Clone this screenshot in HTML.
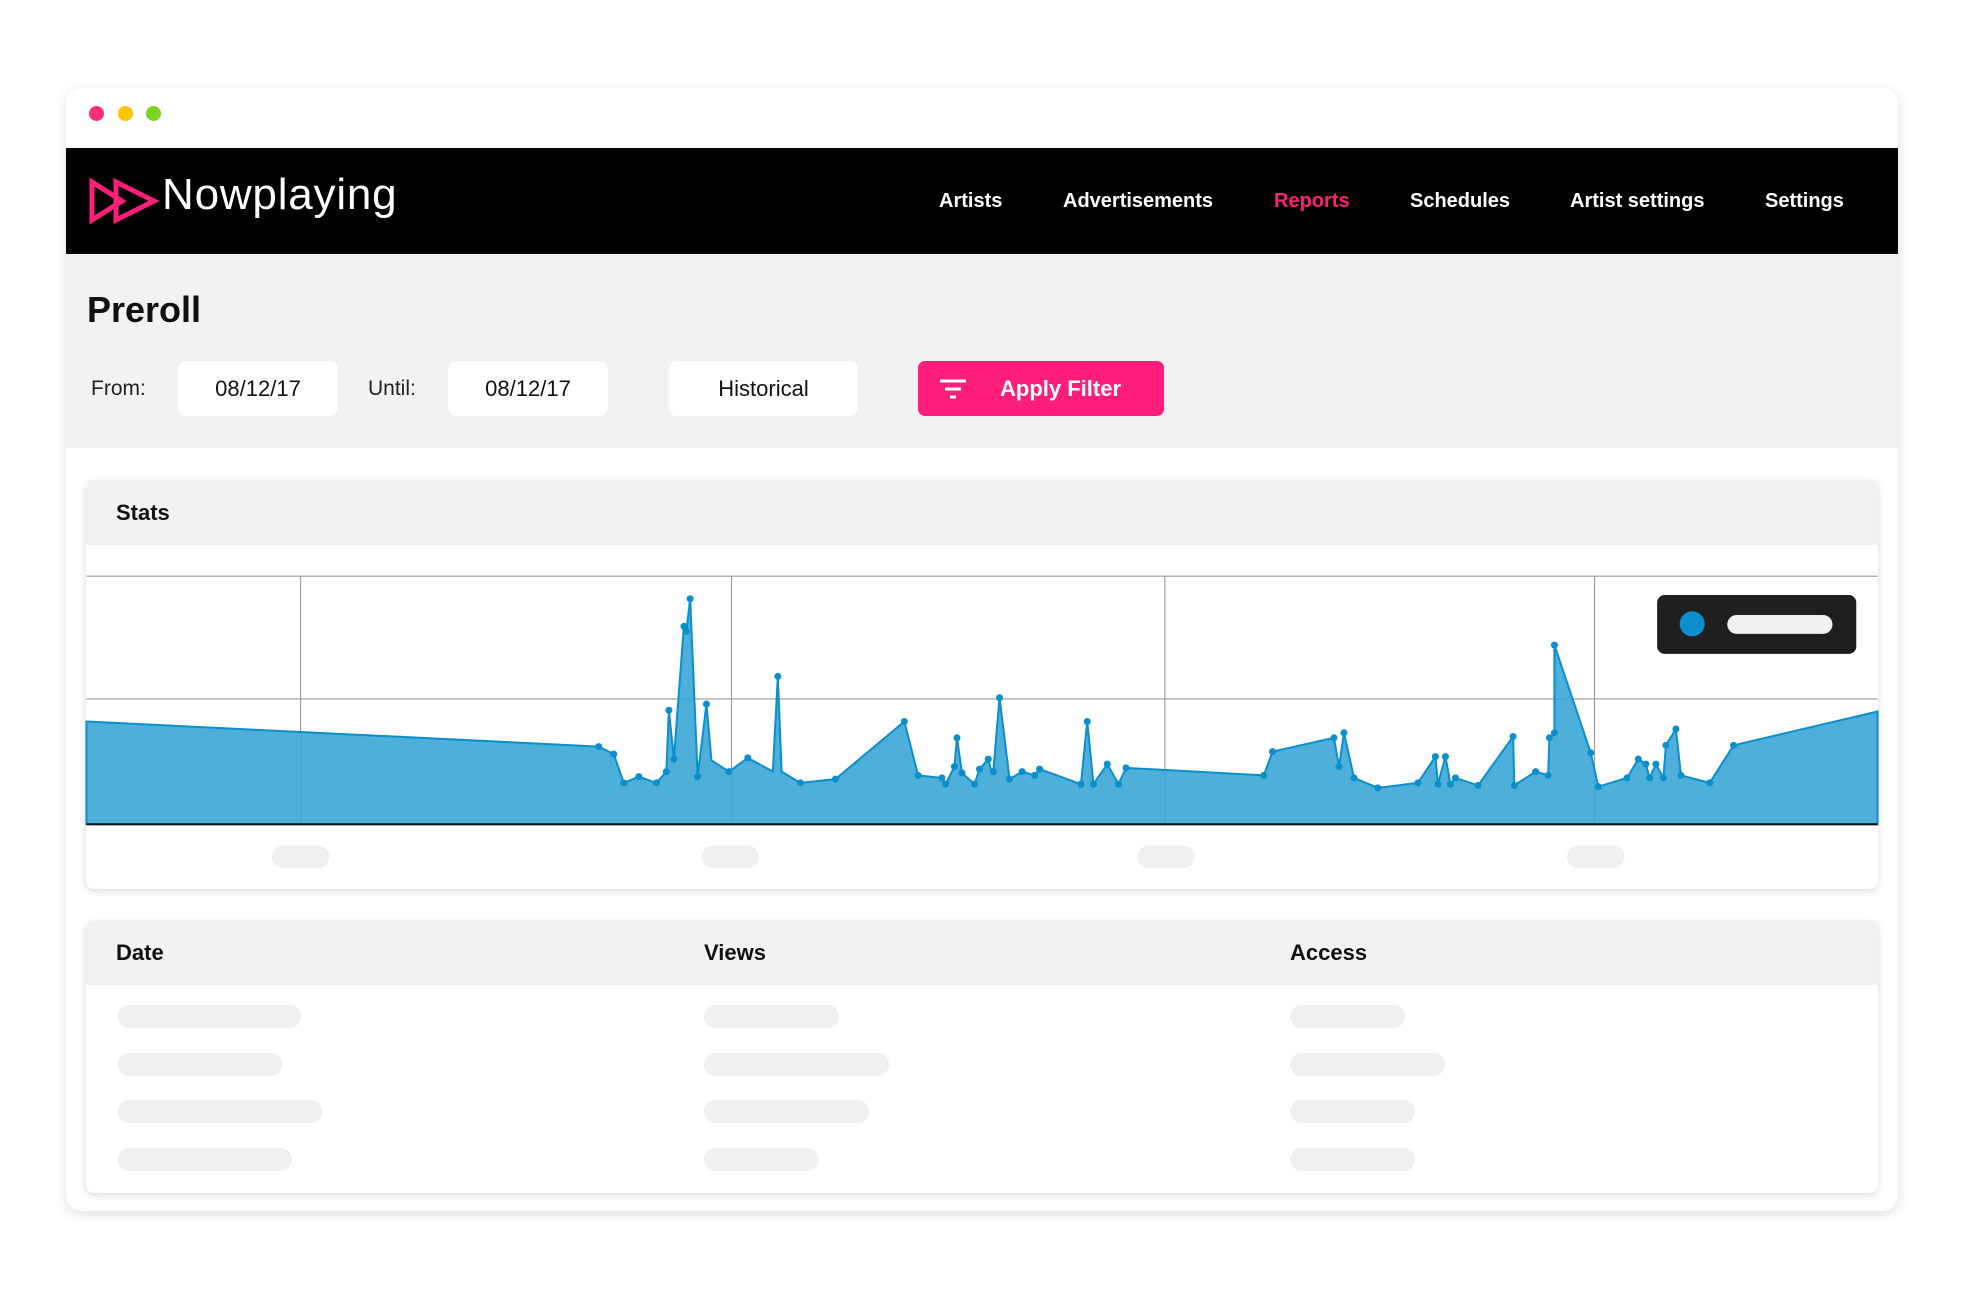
<!DOCTYPE html>
<html><head><meta charset="utf-8"><style>
*{margin:0;padding:0;box-sizing:border-box}
body{width:1964px;height:1298px;background:#fff;position:relative;overflow:hidden;font-family:"Liberation Sans",sans-serif}
.a{position:absolute}
.win{left:66px;top:88px;width:1832px;height:1123px;background:#fff;border-radius:16px;box-shadow:0 3px 14px rgba(0,0,0,.13);overflow:hidden}
.dot{width:15px;height:15px;border-radius:50%;top:106px}
.nav{left:66px;top:148px;width:1832px;height:106px;background:#000}
.ni{top:190px;font-size:20px;font-weight:bold;color:#fff;letter-spacing:0}
.gray{left:66px;top:254px;width:1832px;height:194px;background:#f2f2f2}
.box{background:#fff;border-radius:8px;height:55px;top:361px;font-size:22px;color:#111;text-align:center;line-height:55px}
.lbl{top:361px;line-height:55px;font-size:21px;color:#222}
.card{background:#fff;border-radius:8px;box-shadow:0 2px 8px rgba(0,0,0,.15);overflow:hidden}
.ch{background:#f2f2f2;font-size:22px;font-weight:bold;color:#111}
.p{background:#f0f0f0;height:23px;border-radius:12px}
</style></head><body>
<div class="a win"></div>
<div class="a dot" style="left:89px;background:#ff2e7a"></div>
<div class="a dot" style="left:118px;background:#ffc400"></div>
<div class="a dot" style="left:146px;background:#7ed321"></div>
<div class="a nav"></div>
<svg class="a" style="left:88px;top:178px" width="72" height="46" viewBox="0 0 72 46"><g fill="none" stroke="#ff1f7a" stroke-width="5" stroke-linejoin="miter"><path d="M4 4 L4 42 L34 23 Z"/><path d="M28 4 L28 42 L66 23 Z"/></g></svg>
<div class="a" style="left:162px;top:170px;font-size:44px;color:#fff;letter-spacing:.8px">Nowplaying</div>
<div class="a ni" style="left:939px">Artists</div>
<div class="a ni" style="left:1063px">Advertisements</div>
<div class="a ni" style="left:1274px;color:#ff1f7a">Reports</div>
<div class="a ni" style="left:1410px">Schedules</div>
<div class="a ni" style="left:1570px">Artist settings</div>
<div class="a ni" style="left:1765px">Settings</div>
<div class="a gray"></div>
<div class="a" style="left:87px;top:289px;font-size:36px;font-weight:bold;color:#111">Preroll</div>
<div class="a lbl" style="left:91px">From:</div>
<div class="a box" style="left:178px;width:160px">08/12/17</div>
<div class="a lbl" style="left:368px">Until:</div>
<div class="a box" style="left:448px;width:160px">08/12/17</div>
<div class="a box" style="left:669px;width:189px">Historical</div>
<div class="a" style="left:918px;top:361px;width:246px;height:55px;background:#ff1f7a;border-radius:7px"></div>
<svg class="a" style="left:938px;top:378px" width="30" height="22"><g stroke="#fff" stroke-width="3"><line x1="2" y1="3" x2="28" y2="3"/><line x1="7" y1="11" x2="23" y2="11"/><line x1="12" y1="19" x2="18" y2="19"/></g></svg>
<div class="a" style="left:1000px;top:361px;line-height:55px;font-size:22px;font-weight:bold;color:#fff">Apply Filter</div>

<div class="a card" style="left:86px;top:480px;width:1792px;height:409px">
<div class="ch" style="height:65px;line-height:65px;padding-left:30px">Stats</div></div>

<svg class="a" style="left:0;top:0" width="1964" height="1298" viewBox="0 0 1568 1036.2">
<g stroke="#999" stroke-width="0.9"><line x1="69" y1="460" x2="1499" y2="460"/><line x1="69" y1="558" x2="1499" y2="558"/><line x1="240" y1="460" x2="240" y2="658"/><line x1="584" y1="460" x2="584" y2="658"/><line x1="930" y1="460" x2="930" y2="658"/><line x1="1273" y1="460" x2="1273" y2="658"/></g>
<path id="d" fill="#3aa6d6" fill-opacity=".9" stroke="#0a8fcc" stroke-width="1.6" d="M69,576 L478,596 490,602 498,625 510,620 524,625 532,616 534,567 538,606 546,500 548,504 551,478 557,620 564,562 568,607 582,616 597,605 617,616 621,540 624,616 639,625 667,622 722,576 733,619 752,621 755,626 762,612 764,589 768,617 778,626 782,614 789,606 791,614 793,616 798,557 806,622 816,616 826,619 830,614 863,626 868,576 873,626 884,610 893,626 899,613 1009,619 1016,600 1065,589 1069,612 1073,585 1081,621 1100,629 1132,625 1146,604 1148,626 1154,604 1158,626 1162,621 1180,627 1208,588 1209,627 1226,616 1236,619 1237,589 1241,585 1241,515 1270,601 1276,628 1299,621 1308,606 1314,610 1317,621 1322,610 1328,621 1330,595 1338,582 1342,619 1365,625 1384,595 1499,568 L1499,658 L69,658 Z"/>
<g fill="#0a8fcc">
<circle cx="478" cy="596" r="2.8"/><circle cx="490" cy="602" r="2.8"/><circle cx="498" cy="625" r="2.8"/><circle cx="510" cy="620" r="2.8"/><circle cx="524" cy="625" r="2.8"/><circle cx="532" cy="616" r="2.8"/><circle cx="534" cy="567" r="2.8"/><circle cx="538" cy="606" r="2.8"/><circle cx="546" cy="500" r="2.8"/><circle cx="548" cy="504" r="2.8"/><circle cx="551" cy="478" r="2.8"/><circle cx="557" cy="620" r="2.8"/><circle cx="564" cy="562" r="2.8"/><circle cx="582" cy="616" r="2.8"/><circle cx="597" cy="605" r="2.8"/><circle cx="621" cy="540" r="2.8"/><circle cx="639" cy="625" r="2.8"/><circle cx="667" cy="622" r="2.8"/><circle cx="722" cy="576" r="2.8"/><circle cx="733" cy="619" r="2.8"/><circle cx="752" cy="621" r="2.8"/><circle cx="755" cy="626" r="2.8"/><circle cx="762" cy="612" r="2.8"/><circle cx="764" cy="589" r="2.8"/><circle cx="768" cy="617" r="2.8"/><circle cx="778" cy="626" r="2.8"/><circle cx="782" cy="614" r="2.8"/><circle cx="789" cy="606" r="2.8"/><circle cx="793" cy="616" r="2.8"/><circle cx="798" cy="557" r="2.8"/><circle cx="806" cy="622" r="2.8"/><circle cx="816" cy="616" r="2.8"/><circle cx="826" cy="619" r="2.8"/><circle cx="830" cy="614" r="2.8"/><circle cx="863" cy="626" r="2.8"/><circle cx="868" cy="576" r="2.8"/><circle cx="873" cy="626" r="2.8"/><circle cx="884" cy="610" r="2.8"/><circle cx="893" cy="626" r="2.8"/><circle cx="899" cy="613" r="2.8"/><circle cx="1009" cy="619" r="2.8"/><circle cx="1016" cy="600" r="2.8"/><circle cx="1065" cy="589" r="2.8"/><circle cx="1069" cy="612" r="2.8"/><circle cx="1073" cy="585" r="2.8"/><circle cx="1081" cy="621" r="2.8"/><circle cx="1100" cy="629" r="2.8"/><circle cx="1132" cy="625" r="2.8"/><circle cx="1146" cy="604" r="2.8"/><circle cx="1148" cy="626" r="2.8"/><circle cx="1154" cy="604" r="2.8"/><circle cx="1158" cy="626" r="2.8"/><circle cx="1162" cy="621" r="2.8"/><circle cx="1180" cy="627" r="2.8"/><circle cx="1208" cy="588" r="2.8"/><circle cx="1209" cy="627" r="2.8"/><circle cx="1226" cy="616" r="2.8"/><circle cx="1236" cy="619" r="2.8"/><circle cx="1237" cy="589" r="2.8"/><circle cx="1241" cy="585" r="2.8"/><circle cx="1241" cy="515" r="2.8"/><circle cx="1270" cy="601" r="2.8"/><circle cx="1276" cy="628" r="2.8"/><circle cx="1299" cy="621" r="2.8"/><circle cx="1308" cy="606" r="2.8"/><circle cx="1314" cy="610" r="2.8"/><circle cx="1317" cy="621" r="2.8"/><circle cx="1322" cy="610" r="2.8"/><circle cx="1328" cy="621" r="2.8"/><circle cx="1330" cy="595" r="2.8"/><circle cx="1338" cy="582" r="2.8"/><circle cx="1342" cy="619" r="2.8"/><circle cx="1365" cy="625" r="2.8"/><circle cx="1384" cy="595" r="2.8"/>
</g>
<line x1="69" y1="658" x2="1499" y2="658" stroke="#111" stroke-width="1.6"/>
<g fill="#f0f0f0"><rect x="217" y="675" width="46" height="18" rx="9"/><rect x="560" y="675" width="46" height="18" rx="9"/><rect x="908" y="675" width="46" height="18" rx="9"/><rect x="1251" y="675" width="46" height="18" rx="9"/></g>
<rect x="1323" y="475" width="159" height="47" rx="6" fill="#1f1f1f"/>
<circle cx="1351" cy="498" r="10" fill="#0a8fcc"/>
<rect x="1379" y="491" width="84" height="15" rx="7.5" fill="#f0f0f0"/>
</svg>

<div class="a card" style="left:86px;top:921px;width:1792px;height:272px">
<div class="ch" style="height:64px;line-height:64px;position:relative">
<span class="a" style="left:30px">Date</span><span class="a" style="left:618px">Views</span><span class="a" style="left:1204px">Access</span></div></div>
<div class="a p" style="left:118px;top:1005px;width:183px"></div>
<div class="a p" style="left:118px;top:1053px;width:164px"></div>
<div class="a p" style="left:118px;top:1100px;width:204px"></div>
<div class="a p" style="left:118px;top:1148px;width:174px"></div>
<div class="a p" style="left:704px;top:1005px;width:135px"></div>
<div class="a p" style="left:704px;top:1053px;width:185px"></div>
<div class="a p" style="left:704px;top:1100px;width:165px"></div>
<div class="a p" style="left:704px;top:1148px;width:115px"></div>
<div class="a p" style="left:1290px;top:1005px;width:115px"></div>
<div class="a p" style="left:1290px;top:1053px;width:155px"></div>
<div class="a p" style="left:1290px;top:1100px;width:125px"></div>
<div class="a p" style="left:1290px;top:1148px;width:125px"></div>
</body></html>
